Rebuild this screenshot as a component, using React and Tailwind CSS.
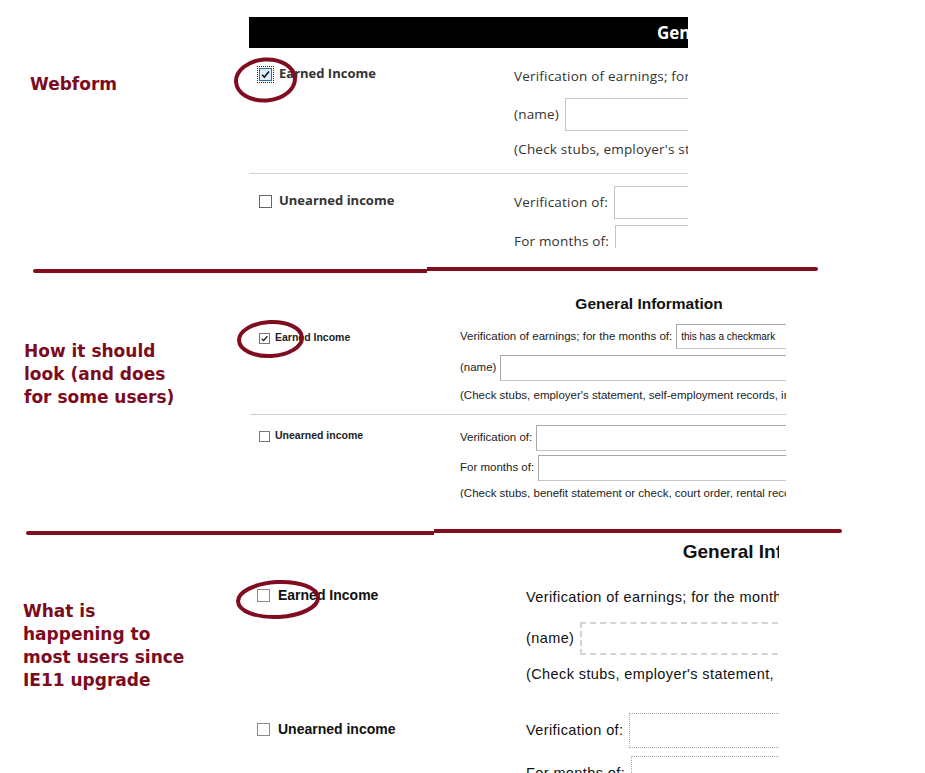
import React from 'react';

const red = 'bg-[#800c1f]';

function Box({ checked, focused, size = 'w-[13px] h-[13px]', border = 'border-[#555]' }) {
    return (
        <span
            className={`relative inline-flex shrink-0 items-center justify-center border ${size} ${border} ${
                focused ? 'bg-[#dcedf9] outline outline-1 outline-dotted outline-[#222] outline-offset-1' : 'bg-white'
            }`}
        >
            {checked && (
                <svg viewBox="0 0 12 12" className="w-full h-full">
                    <path d="M2.3 6.2 L4.8 8.8 L9.8 2.8" fill="none" stroke="#111" strokeWidth="1.7" />
                </svg>
            )}
        </span>
    );
}

function Note({ lines, className }) {
    return (
        <div className={`text-[#7d0b1e] font-bold text-[17px] leading-[23px] ${className}`} style={{ fontFamily: '"DejaVu Sans", Verdana, sans-serif' }}>
            {lines.map((l) => (
                <div key={l} className="whitespace-nowrap">{l}</div>
            ))}
        </div>
    );
}

// first crop: the webform as the designer sees it
function WebformCrop() {
    return (
        <div className="w-[439px] h-[231px] overflow-hidden text-[#333] text-[13.5px] tracking-[0.2px]" style={{ fontFamily: '"Open Sans", sans-serif' }}>
            <div className="w-[990px]">
                <div className="h-[31px] bg-black flex items-center justify-center text-white font-bold text-[17px] tracking-normal">General Information</div>
                <div className="flex border-b border-[#d0d0d0]">
                    <div className="w-[265px] shrink-0 pl-[10px] pt-[16px]">
                        <div className="flex items-center gap-[7px] h-[20px] font-bold text-[13px] tracking-normal">
                            <Box checked focused border="border-[#2f6ea5]" />
                            Earned Income
                        </div>
                    </div>
                    <div className="flex flex-col pt-[18px] pb-[14px]">
                        <div className="h-[20px] leading-[20px] whitespace-nowrap">Verification of earnings; for the months of:</div>
                        <div className="mt-[12px] flex items-center">
                            <span>(name)</span>
                            <span className="ml-[6px] w-[420px] h-[33px] border border-[#c6c6c6]"></span>
                        </div>
                        <div className="mt-[8px] h-[20px] leading-[20px] whitespace-nowrap">(Check stubs, employer's statement, self-employment records, income tax returns)</div>
                    </div>
                </div>
                <div className="flex">
                    <div className="w-[265px] shrink-0 pl-[10px] pt-[17px]">
                        <div className="flex items-center gap-[7px] h-[20px] font-bold text-[13px] tracking-normal">
                            <Box border="border-[#666]" />
                            Unearned income
                        </div>
                    </div>
                    <div className="flex flex-col pt-[12px]">
                        <div className="flex items-center">
                            <span className="whitespace-nowrap">Verification of:</span>
                            <span className="ml-[6px] w-[400px] h-[33px] border border-[#c6c6c6]"></span>
                        </div>
                        <div className="mt-[6px] flex items-center">
                            <span className="whitespace-nowrap">For months of:</span>
                            <span className="ml-[6px] w-[400px] h-[33px] border border-[#c6c6c6]"></span>
                        </div>
                    </div>
                </div>
            </div>
        </div>
    );
}

function ShouldCrop() {
    return (
        <div className="w-[536px] h-[208px] overflow-hidden text-[#222] text-[11.5px]" style={{ fontFamily: '"Liberation Sans", Arial, sans-serif' }}>
            <div className="w-[798px]">
                <div className="h-[28px] flex items-center justify-center font-bold text-[15.5px] text-[#111]">General Information</div>
                <div className="flex border-b border-[#cfcfcf]">
                    <div className="w-[210px] shrink-0 pl-[9px] pt-[12px]">
                        <div className="flex items-center gap-[5px] h-[16px] font-bold text-[10.5px]">
                            <Box checked size="w-[11px] h-[11px]" border="border-[#777]" />
                            Earned Income
                        </div>
                    </div>
                    <div className="flex flex-col pt-[6px] pb-[11px]">
                        <div className="flex items-center">
                            <span className="whitespace-nowrap">Verification of earnings; for the months of:</span>
                            <span className="ml-[4px] w-[300px] h-[25px] border border-[#c4c4c4] border-t-[#a8a8a8] border-l-[#a8a8a8] flex items-center px-[4px] text-[10px] text-[#111] whitespace-nowrap">this has a checkmark</span>
                        </div>
                        <div className="mt-[6px] flex items-center">
                            <span>(name)</span>
                            <span className="ml-[4px] w-[400px] h-[26px] border border-[#c4c4c4] border-t-[#a8a8a8] border-l-[#a8a8a8]"></span>
                        </div>
                        <div className="mt-[6px] h-[16px] leading-[16px] whitespace-nowrap">(Check stubs, employer's statement, self-employment records, income tax returns)</div>
                    </div>
                </div>
                <div className="flex">
                    <div className="w-[210px] shrink-0 pl-[9px] pt-[13px]">
                        <div className="flex items-center gap-[5px] h-[16px] font-bold text-[10.5px]">
                            <Box size="w-[11px] h-[11px]" border="border-[#777]" />
                            Unearned income
                        </div>
                    </div>
                    <div className="flex flex-col pt-[10px]">
                        <div className="flex items-center">
                            <span className="whitespace-nowrap">Verification of:</span>
                            <span className="ml-[4px] w-[400px] h-[26px] border border-[#c4c4c4] border-t-[#a8a8a8] border-l-[#a8a8a8]"></span>
                        </div>
                        <div className="mt-[4px] flex items-center">
                            <span className="whitespace-nowrap">For months of:</span>
                            <span className="ml-[4px] w-[400px] h-[26px] border border-[#c4c4c4] border-t-[#a8a8a8] border-l-[#a8a8a8]"></span>
                        </div>
                        <div className="mt-[4px] h-[16px] leading-[16px] whitespace-nowrap">(Check stubs, benefit statement or check, court order, rental records)</div>
                    </div>
                </div>
            </div>
        </div>
    );
}

function BrokenCrop() {
    return (
        <div className="w-[529px] h-[233px] overflow-hidden text-[#111] text-[14.5px] tracking-[0.4px]" style={{ fontFamily: '"Liberation Sans", Arial, sans-serif' }}>
            <div className="w-[1046px]">
                <div className="h-[24px] flex items-center justify-center font-bold text-[19px] tracking-normal">General Information</div>
                <div className="flex">
                    <div className="w-[276px] shrink-0 pl-[7px] pt-[22px]">
                        <div className="flex items-center gap-[8px] h-[18px] font-bold text-[14px] tracking-normal">
                            <Box border="border-[#8a8a8a]" />
                            Earned Income
                        </div>
                    </div>
                    <div className="flex flex-col pt-[24px]">
                        <div className="h-[18px] leading-[18px] whitespace-nowrap">Verification of earnings; for the months of:</div>
                        <div className="mt-[16px] flex items-center">
                            <span>(name)</span>
                            <span className="ml-[6px] w-[420px] h-[33px] border-2 border-dashed border-[#d4d4d4]"></span>
                        </div>
                        <div className="mt-[10px] h-[18px] leading-[18px] whitespace-nowrap">(Check stubs, employer's statement, self-employment records, income tax returns)</div>
                    </div>
                </div>
                <div className="flex mt-[30px]">
                    <div className="w-[276px] shrink-0 pl-[7px] pt-[7px]">
                        <div className="flex items-center gap-[8px] h-[18px] font-bold text-[14px] tracking-normal">
                            <Box border="border-[#8a8a8a]" />
                            Unearned income
                        </div>
                    </div>
                    <div className="flex flex-col">
                        <div className="flex items-center">
                            <span className="whitespace-nowrap">Verification of:</span>
                            <span className="ml-[6px] w-[400px] h-[35px] border border-dotted border-[#a8a8a8]"></span>
                        </div>
                        <div className="mt-[8px] flex items-center">
                            <span className="whitespace-nowrap">For months of:</span>
                            <span className="ml-[6px] w-[400px] h-[35px] border border-dotted border-[#a8a8a8]"></span>
                        </div>
                    </div>
                </div>
            </div>
        </div>
    );
}

export default function App() {
    return (
        <div className="relative w-[925px] h-[773px] overflow-hidden bg-white flex flex-col">
            <div className="h-[267px] flex shrink-0">
                <div className="w-[249px] shrink-0 pl-[30px] pt-[73px]">
                    <Note lines={['Webform']} />
                </div>
                <div className="pt-[17px]">
                    <WebformCrop />
                </div>
            </div>

            <div className="h-[8px] flex items-start shrink-0">
                <div className={`ml-[33px] mt-[2px] w-[394px] h-[4px] rounded-l-full ${red}`}></div>
                <div className={`w-[391px] h-[4px] rounded-r-full ${red}`}></div>
            </div>

            <div className="h-[252px] flex shrink-0">
                <div className="w-[250px] shrink-0 pl-[24px] pt-[65px]">
                    <Note lines={['How it should', 'look (and does', 'for some users)']} />
                </div>
                <div className="pt-[15px]">
                    <ShouldCrop />
                </div>
            </div>

            <div className="h-[10px] flex items-start shrink-0">
                <div className={`ml-[26px] mt-[4px] w-[408px] h-[4px] rounded-l-full ${red}`}></div>
                <div className={`mt-[2px] w-[408px] h-[4px] rounded-r-full ${red}`}></div>
            </div>

            <div className="flex-1 flex">
                <div className="w-[250px] shrink-0 pl-[23px] pt-[63px]">
                    <Note lines={['What is', 'happening to', 'most users since', 'IE11 upgrade']} />
                </div>
                <div className="pt-[3px]">
                    <BrokenCrop />
                </div>
            </div>

            {/* hand drawn circles over the checkboxes */}
            <svg className="absolute inset-0 pointer-events-none" width="925" height="773">
                <g fill="none" stroke="#800c1f" strokeWidth="4">
                    <ellipse cx="265.5" cy="80" rx="29.5" ry="20.5" transform="rotate(-4 265.5 80)" />
                    <ellipse cx="270.5" cy="339" rx="31.5" ry="17" transform="rotate(-3 270.5 339)" />
                    <ellipse cx="278" cy="599.5" rx="40" ry="17.5" transform="rotate(-3 278 599.5)" />
                </g>
            </svg>
        </div>
    );
}
